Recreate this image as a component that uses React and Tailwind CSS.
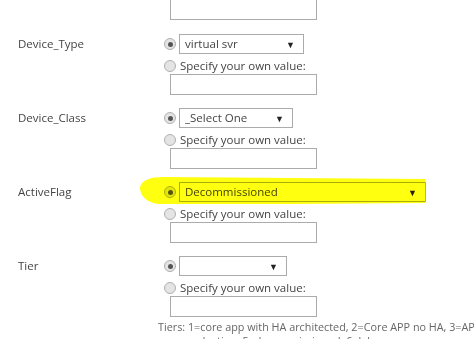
import React from "react";

function Radio({ checked }) {
  return (
    <span className="relative flex h-[12px] w-[12px] shrink-0 items-center justify-center rounded-full border border-[#b0b0b0] bg-[#e4e4e4]">
      {checked && <span className="h-[5px] w-[5px] rounded-full bg-[#555]" />}
    </span>
  );
}

function Select({ value, width }) {
  return (
    <div
      className={`relative flex h-[20px] items-center border border-[#ababab] pl-[5px] text-[11.5px] leading-none text-[#444] ${width}`}
    >
      <span>{value}</span>
      <span className="absolute right-[8px] top-[5px] text-[9px] leading-none text-[#222]">▼</span>
    </div>
  );
}

function TextBox() {
  return <div className="ml-[6px] h-[21px] w-[147px] border border-[#ababab]" />;
}

function Block({ label, value, width, highlight }) {
  return (
    <div className="flex">
      <div className="w-[164px] shrink-0 pl-[18px] text-[11.5px] leading-[20px] text-[#444]">{label}</div>
      <div className="relative flex flex-col">
        <div className="flex items-center gap-[3px]">
          <Radio checked />
          <Select value={value} width={width} />
        </div>
        <div className="mt-[4px] flex h-[16px] items-center gap-[4px] text-[11.5px] text-[#444]">
          <Radio />
          <span className="leading-none">Specify your own value:</span>
        </div>
        <TextBox />
        {highlight && (
          <svg
            className="pointer-events-none absolute left-[-24px] top-[-7px] mix-blend-multiply"
            width="290"
            height="32"
            viewBox="0 0 290 32"
          >
            <path
              d="M0,12 C2,5 10,2 24,2 L150,3 L285,4 L285,28 L150,29 L20,29 C10,29 3,23 1,18 C0,15 0,13 0,12 Z"
              fill="#ffff10"
            />
          </svg>
        )}
      </div>
    </div>
  );
}

export default function App() {
  return (
    <div
      className="h-[339px] w-[474px] overflow-hidden bg-white"
      style={{ fontFamily: '"Open Sans", "Noto Sans", sans-serif' }}
    >
      <div className="ml-[164px] mt-[-1px] h-[21px]">
        <TextBox />
      </div>
      <div className="mt-[14px] flex flex-col gap-[13px]">
        <Block label="Device_Type" value="virtual svr" width="w-[125px]" />
        <Block label="Device_Class" value="_Select One" width="w-[114px]" />
        <Block label="ActiveFlag" value="Decommissioned" width="w-[247px]" highlight />
        <Block label="Tier" value="" width="w-[108px]" />
      </div>
      <div className="ml-[158px] mt-[3px] whitespace-nowrap text-[10.8px] leading-[14px] text-[#666]">
        <div>Tiers: 1=core app with HA architected, 2=Core APP no HA, 3=APP</div>
        <div>non-production, 5=decommissioned, 6=lab</div>
      </div>
    </div>
  );
}
